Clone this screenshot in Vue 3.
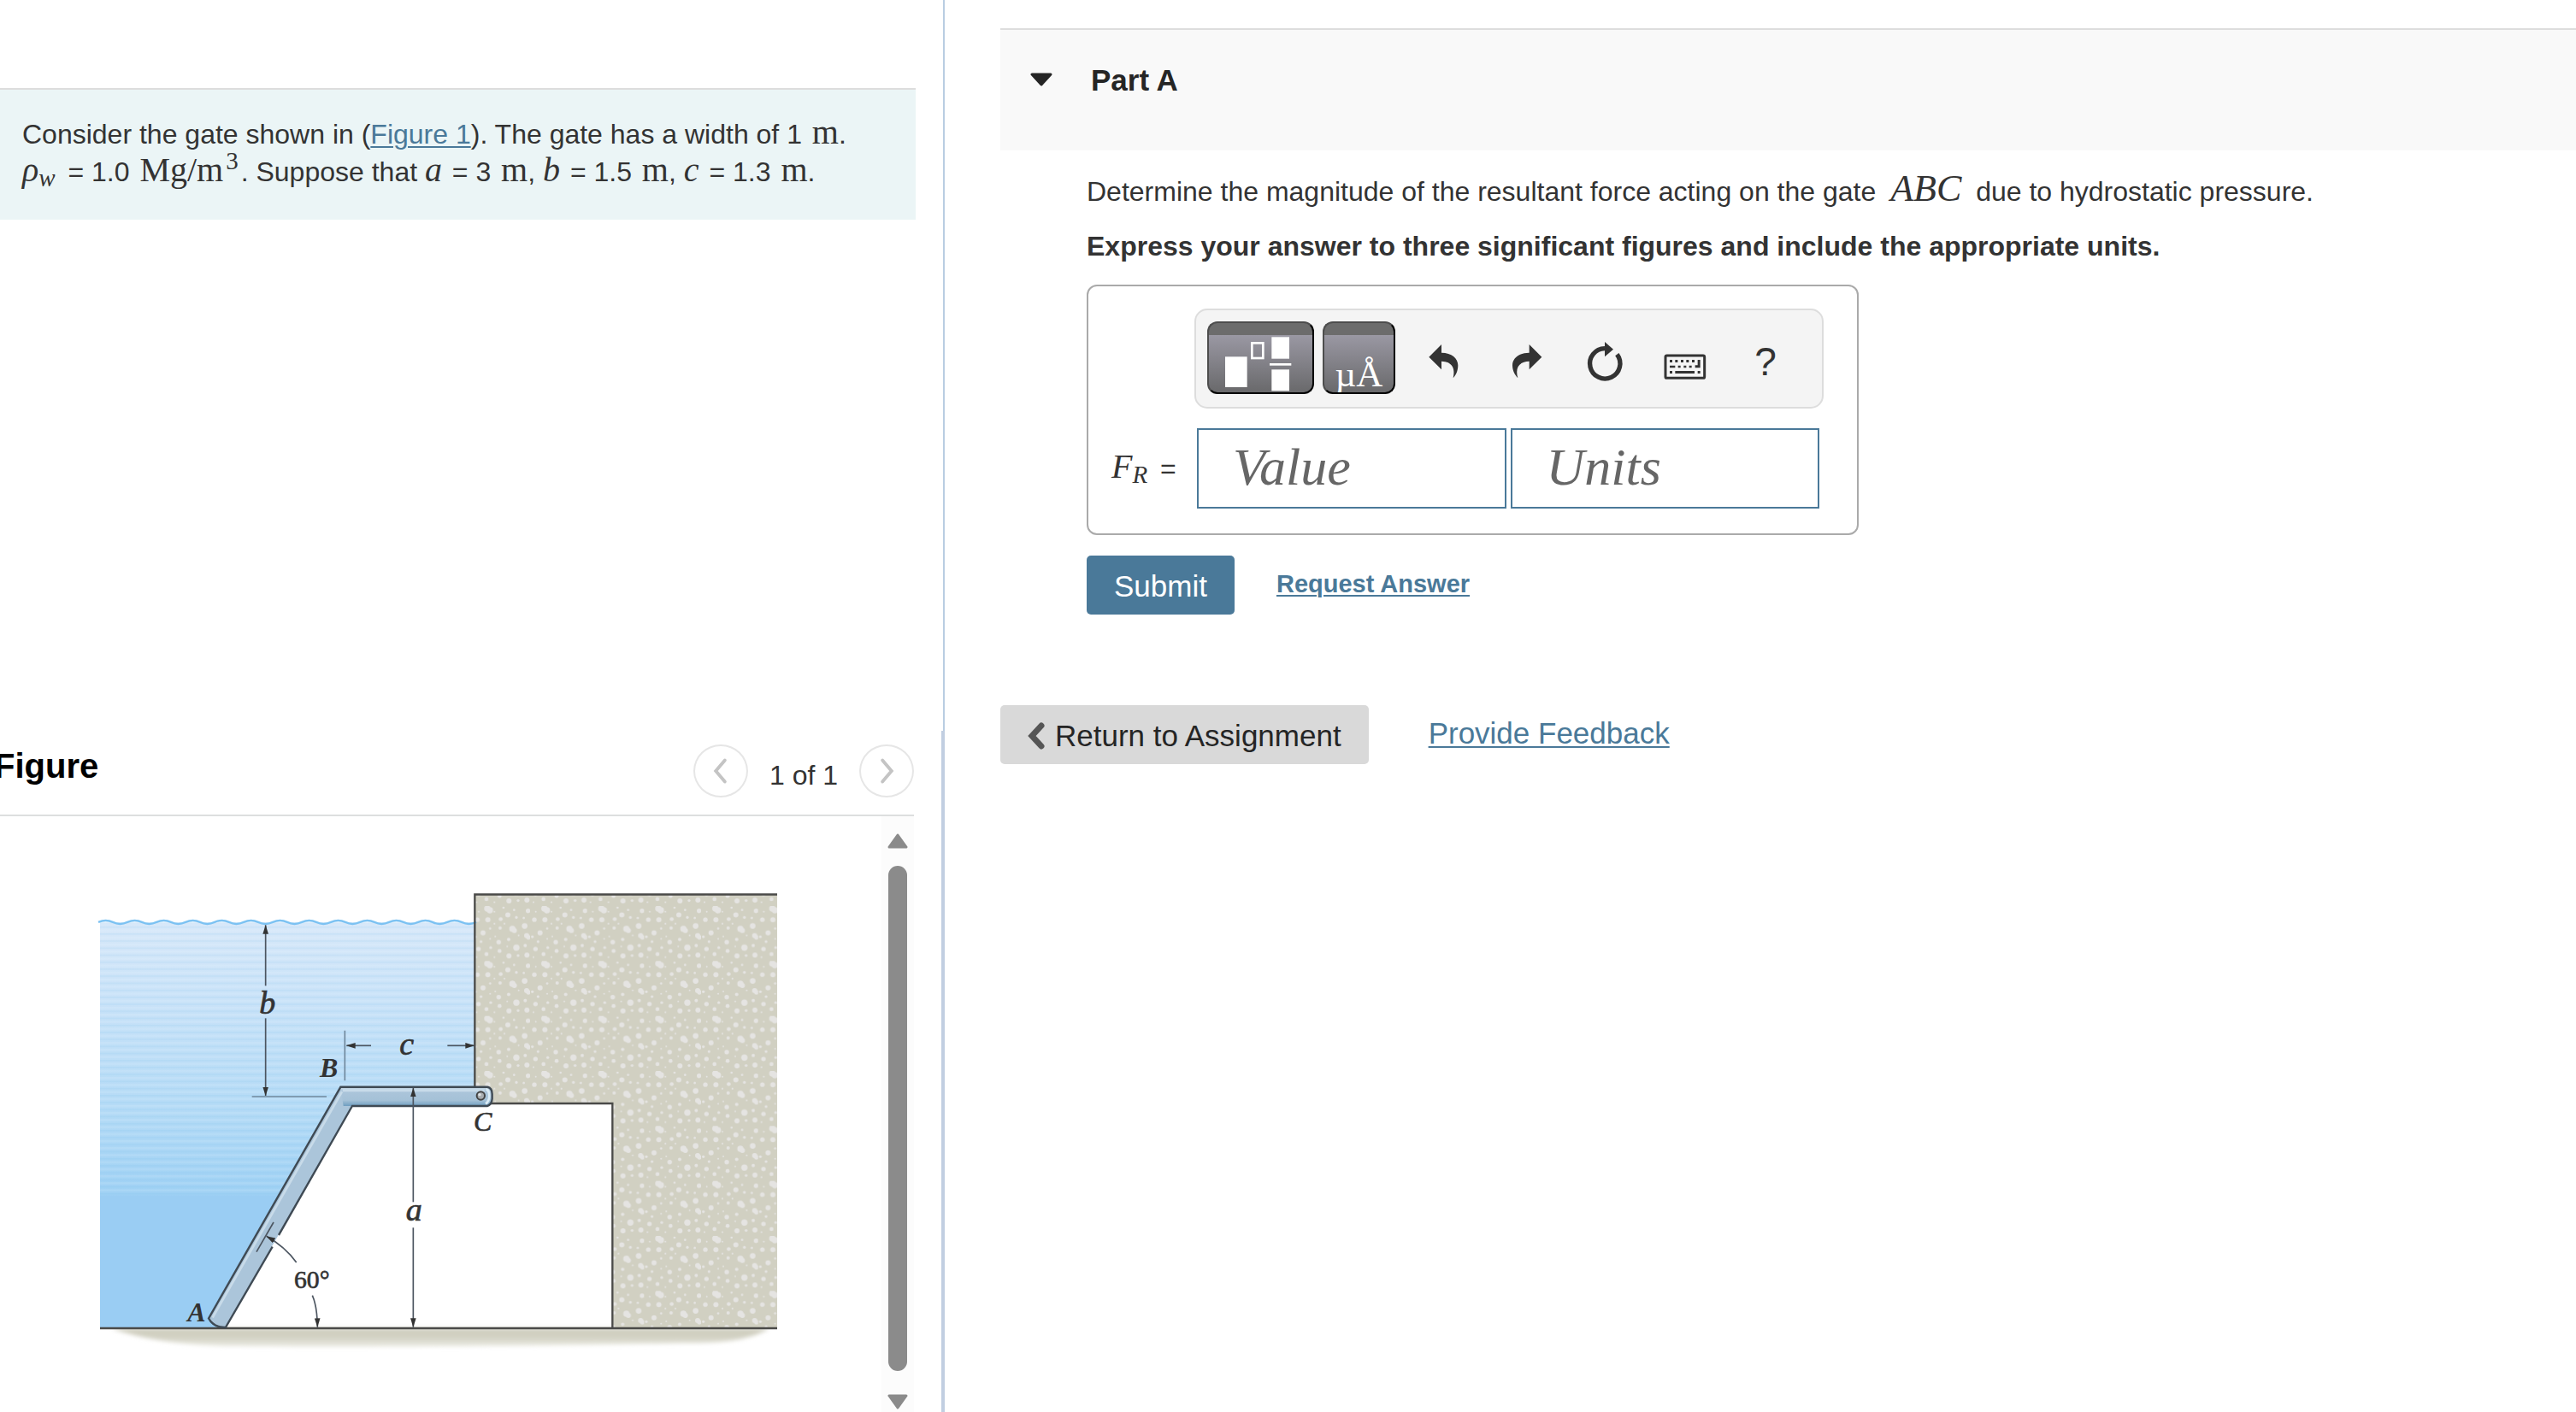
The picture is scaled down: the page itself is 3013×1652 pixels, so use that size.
<template>
  <main class="page">
    <div class="side">
      <section class="intro">
        <div class="problem">
          Consider the gate shown in (<a href="#figure">Figure 1</a>). The gate has a width of 1 <span class="math-unit">m</span>.<br />
          <i class="math">ρ<sub>w</sub></i> = 1.0 <span class="math-unit">Mg/m<sup>3</sup></span>. Suppose that
          <i class="math">a</i> = 3 <span class="math-unit">m</span>, <i class="math">b</i> = 1.5
          <span class="math-unit">m</span>, <i class="math">c</i> = 1.3 <span class="math-unit">m</span>.
        </div>
      </section>

      <section id="figure" class="figure">
        <header class="figure__header">
          <h2>Figure</h2>
          <nav class="pager">
            <button type="button" class="pager__button" aria-label="Previous figure">
              <svg viewBox="0 0 60 60"><path d="M35 17 24 30 35 43" /></svg>
            </button>
            <span class="pager__count">1 of 1</span>
            <button type="button" class="pager__button" aria-label="Next figure">
              <svg viewBox="0 0 60 60"><path d="M25 17 36 30 25 43" /></svg>
            </button>
          </nav>
        </header>

        <div class="figure__body">
          <svg class="drawing" viewBox="0 0 2460 1680" role="img" aria-label="Gate ABC">
            <defs>
              <linearGradient id="water" x1="0" y1="0" x2="0" y2="1">
                <stop offset="0" stop-color="#d7e8f9" />
                <stop offset="0.2" stop-color="#c8e2f8" />
                <stop offset="0.45" stop-color="#b5dbf6" />
                <stop offset="0.672" stop-color="#9fd1f4" />
                <stop offset="0.674" stop-color="#9acdf3" />
                <stop offset="1" stop-color="#9acdf3" />
              </linearGradient>
              <pattern id="ripples" width="40" height="23" patternUnits="userSpaceOnUse">
                <rect width="40" height="7" fill="#ffffff" opacity="0.1" />
                <rect y="13" width="40" height="4" fill="#6fb6e8" opacity="0.12" />
              </pattern>
              <pattern id="stones" x="1560" y="90" width="200" height="193" patternUnits="userSpaceOnUse">
                <rect width="200" height="193" fill="#d1d0c2" />
                <circle v-for="(s, i) in stones" :key="i" :cx="s[0]" :cy="s[1]" :r="s[2]" fill="#e5e4e2" />
              </pattern>
              <linearGradient id="steel" x1="0" y1="0" x2="0" y2="1">
                <stop offset="0" stop-color="#c9dae7" />
                <stop offset="0.25" stop-color="#abc5da" />
                <stop offset="0.7" stop-color="#a5c1d7" />
                <stop offset="1" stop-color="#6f9ec0" />
              </linearGradient>
              <linearGradient id="soil" x1="0" y1="0" x2="0" y2="1">
                <stop offset="0" stop-color="#cdccbc" />
                <stop offset="0.5" stop-color="#d3d2c4" />
                <stop offset="1" stop-color="#ecece5" />
              </linearGradient>
              <filter id="soft" x="-5%" y="-30%" width="110%" height="160%">
                <feGaussianBlur stdDeviation="7" />
              </filter>
              <marker id="arrow" viewBox="0 0 32 20" refX="31" refY="10" markerWidth="32" markerHeight="20"
                      markerUnits="userSpaceOnUse" orient="auto-start-reverse">
                <path d="M0 0 32 10 0 20Z" fill="#333" />
              </marker>
            </defs>

            <path d="M1366 49H2427V1572H1849V783H1366Z" fill="url(#stones)" />

            <g transform="scale(1 1.0714)">
              <path d="M90 1468H2400C2330 1505 2240 1518 2100 1516C1700 1524 1000 1532 500 1526C330 1522 210 1505 90 1468Z"
                    fill="url(#soil)" filter="url(#soft)" />

              <path d="M51 138H1366V700H920L470 1466H51Z" fill="url(#water)" />
              <path d="M51 145H1366V700H920L680 1032H51Z" fill="url(#ripples)" />
              <path :d="wave" class="wave" />

              <path d="M2427 46H1366V690M1415 731H1849V1467" class="edge" />
              <path d="M51 1467H2427" class="edge" />

              <path d="M895 677H1410Q1427 680 1427 700V716Q1425 736 1410 739H936L492 1464Q450 1466 432 1435Z" fill="#abc5da" />
              <path d="M895 677H1410Q1427 680 1427 700V716Q1425 736 1410 739H936L905 739Z" fill="url(#steel)" />
              <path d="M903 688H1400M900 692 446 1432" class="shine" />
              <path d="M1406 684Q1417 690 1417 706T1404 732" stroke="#dcecf6" stroke-width="8" fill="none" />
              <path d="M656 1200 492 1464Q450 1466 432 1435L895 677H1410Q1427 680 1427 700V716Q1425 736 1410 739H936L678 1162" class="gate" />
            </g>

            <circle cx="1387" cy="756" r="14" fill="#a9adb0" stroke="#444" stroke-width="6" />
            <circle cx="1383" cy="752" r="5" fill="#dfe3e6" />

            <g class="dimension">
              <path d="M632 370V157" marker-end="url(#arrow)" />
              <path d="M632 484V756" marker-end="url(#arrow)" />
              <path d="M584 759H846M910 527V703" class="extension" />
              <path d="M1002 580H916" marker-end="url(#arrow)" />
              <path d="M1270 580H1364" marker-end="url(#arrow)" />
              <path d="M1150 1129V729" marker-end="url(#arrow)" />
              <path d="M1150 1219V1568" marker-end="url(#arrow)" />
              <path d="M660 1200 600 1304" />
              <path d="M740 1341Q700 1286 635 1249" marker-end="url(#arrow)" />
              <path d="M796 1457Q813 1495 814 1568" marker-end="url(#arrow)" />
            </g>

            <g class="letters">
              <text x="610" y="467" class="letters__large">b</text>
              <text x="1102" y="611" class="letters__large">c</text>
              <text x="1124" y="1195" class="letters__large">a</text>
              <text x="822" y="691" class="letters__bold">B</text>
              <text x="358" y="1547" class="letters__bold">A</text>
              <text x="1362" y="879">C</text>
              <text x="732" y="1431" class="letters__upright">60°</text>
            </g>
          </svg>

          <div class="scrollbar" aria-hidden="true">
            <svg class="scrollbar__arrow" viewBox="0 0 24 18"><path d="M12 2 22 16H2Z" /></svg>
            <div class="scrollbar__thumb"></div>
            <svg class="scrollbar__arrow" viewBox="0 0 24 18"><path d="M2 2H22L12 16Z" /></svg>
          </div>
        </div>
      </section>
    </div>

    <div class="content">
      <header class="part">
        <svg class="part__caret" viewBox="0 0 26 16"><path d="M2 2H24L13 14Z" /></svg>
        <h1>Part A</h1>
      </header>

      <form class="question" @submit.prevent>
        <p>
          Determine the magnitude of the resultant force acting on the gate <i class="math math--gate">ABC</i> due to
          hydrostatic pressure.
        </p>
        <p class="question__hint">Express your answer to three significant figures and include the appropriate units.</p>

        <div class="answer">
          <div class="toolbar">
            <button type="button" class="tool tool--wide" aria-label="Templates">
              <svg viewBox="0 0 363 243" fill="#fff">
                <rect x="57" y="118" width="77" height="107" />
                <rect x="151" y="70" width="39" height="53" fill="none" stroke="#fff" stroke-width="8" />
                <rect x="220" y="49" width="62" height="76" />
                <rect x="213" y="141" width="76" height="8" />
                <rect x="220" y="163" width="62" height="75" />
              </svg>
            </button>
            <button type="button" class="tool">µÅ</button>
            <div class="toolbar__icons">
              <button type="button" aria-label="Undo">
                <svg viewBox="0 0 282 255">
                  <path d="M88 125 132 81V110C168 110 190 130 190 154C190 174 182 190 173 199C181 165 170 141 132 140V169Z" />
                </svg>
              </button>
              <button type="button" aria-label="Redo">
                <svg viewBox="0 0 282 255">
                  <path d="M202 125 158 81V110C122 110 99 130 99 154C99 174 109 190 118 199C108 165 120 141 158 140V169Z" />
                </svg>
              </button>
              <button type="button" aria-label="Reset">
                <svg viewBox="0 0 282 255">
                  <path d="M184 116A53 53 0 1 1 141 95" fill="none" stroke="#333" stroke-width="16" />
                  <path d="M141 72 171 98 141 124Z" />
                </svg>
              </button>
              <button type="button" aria-label="Keyboard shortcuts">
                <svg viewBox="0 0 282 255">
                  <rect x="72" y="120" width="137" height="79" rx="5" fill="none" stroke="#333" stroke-width="9" />
                  <path d="M87 135h9v9h-9zM106 135h9v9h-9zM126 135h9v9h-9zM145 135h9v9h-9zM165 135h9v9h-9zM185 135h9v28h-18v-9h9zM87 155h19v8h-19zM116 155h9v8h-9zM136 155h9v8h-9zM155 155h9v8h-9zM87 174h9v9h-9zM106 174h68v9h-68zM185 174h9v9h-9z" />
                </svg>
              </button>
              <button type="button" class="toolbar__help" aria-label="Help">?</button>
            </div>
          </div>

          <label class="answer__label" for="value"><i class="math">F<sub>R</sub></i> =</label>
          <div class="answer__fields">
            <input id="value" v-model="value" type="text" placeholder="Value" />
            <input v-model="units" type="text" placeholder="Units" aria-label="Units" />
          </div>
        </div>

        <div class="actions">
          <button type="submit" class="button button--primary">Submit</button>
          <a href="#" class="actions__request">Request Answer</a>
        </div>
      </form>

      <footer class="footer">
        <button type="button" class="button">
          <svg class="button__chevron" viewBox="0 0 20 32"><path d="M16 4 5 16 16 28" /></svg>
          Return to Assignment
        </button>
        <a href="#" class="footer__feedback">Provide Feedback</a>
      </footer>
    </div>
  </main>
</template>

<script setup>
import { ref } from 'vue'

const value = ref('')
const units = ref('')

// [x, y, radius] of each pebble in one tile of the concrete
const stones = [
  [50, 9, 11], [59, 15, 11], [122, 31, 9], [193, 17, 8], [15, 48, 8], [52, 48, 9], [97, 46, 7],
  [35, 94, 9], [60, 79, 4], [95, 77, 6], [138, 80, 11], [145, 86, 9], [181, 70, 10], [110, 62, 3],
  [152, 40, 5], [188, 104, 9], [194, 110, 8], [125, 117, 6], [90, 127, 8], [62, 146, 5], [28, 125, 5],
  [19, 151, 8], [152, 146, 11], [93, 158, 7], [126, 175, 9], [47, 169, 7], [189, 172, 9], [158, 174, 5],
  [183, 139, 6], [107, 6, 4], [144, 14, 4], [178, 42, 4], [78, 107, 3], [160, 103, 3], [8, 108, 5],
  [75, 20, 3], [20, 20, 3], [75, 62, 3], [120, 142, 3], [75, 180, 3], [12, 180, 3], [60, 115, 3]
]

// water surface: thirteen crests between the left edge and the wall
const wave = 'M45 137' + ' q26 -11 51 0 t51 0'.repeat(13)
</script>

<style>
body {
  margin: 0;
  background: #ffffff;
}
</style>

<style scoped>
.page {
  display: grid;
  grid-template-columns: minmax(0, 1105fr) minmax(0, 1908fr);
  height: 100vh;
  overflow: hidden;
  color: #333333;
  font-family: "Liberation Sans", Arial, sans-serif;
  font-size: 32px;
  line-height: 44px;
}

a {
  color: #4a7999;
  text-decoration-thickness: 2px;
  text-underline-offset: 3px;
}

button {
  font: inherit;
  cursor: pointer;
}

svg {
  display: block;
}

.math,
.math-unit {
  margin-right: 3px;
  font-family: "Liberation Serif", "Times New Roman", serif;
  font-size: 40px;
  line-height: 0;
}

.math-unit {
  margin: 0 0 0 3px;
}

.math--gate {
  margin: 0 8px;
  font-size: 44px;
}

sub,
sup {
  margin-right: 3px;
  font-size: 29px;
  line-height: 0;
  vertical-align: -6px;
}

sup {
  margin-left: 3px;
  vertical-align: 14px;
}

.side {
  display: grid;
  grid-template-rows: minmax(0, 855fr) minmax(0, 797fr);
  min-height: 0;
}

.intro {
  padding: 103px 32px 0 0;
  border-right: 2px solid #b9cde2;
}

.problem {
  padding: 30px 26px 34px;
  border-top: 2px solid #dddddd;
  background: #ebf5f6;
  white-space: nowrap;
}

.figure {
  display: flex;
  flex-direction: column;
  padding-right: 32px;
  border-right: 4px solid #c1cee1;
  overflow: hidden;
}

.figure__header {
  display: flex;
  justify-content: space-between;
  box-sizing: border-box;
  height: 100px;
  margin-left: -7px;
  padding-top: 16px;
  border-bottom: 2px solid #dddfdf;
}

.figure__header h2 {
  margin: 0;
  padding-top: 3px;
  color: #000000;
  font-size: 40px;
}

.pager {
  display: flex;
}

.pager__button {
  width: 64px;
  height: 62px;
  padding: 0;
  border: 2px solid #e6e6e6;
  border-radius: 50%;
  background: #ffffff;
}

.pager__button path {
  fill: none;
  stroke: #c4c4c4;
  stroke-width: 4;
  stroke-linecap: round;
}

.pager__button svg {
  width: 100%;
  height: 100%;
}

.pager__count {
  width: 130px;
  padding-top: 14px;
  text-align: center;
}

.figure__body {
  display: flex;
  flex: 1;
  justify-content: space-between;
  min-height: 0;
  padding-left: 100px;
}

.drawing {
  flex: 0 0 820px;
  height: 560px;
  margin-top: 75px;
}

.wave {
  fill: none;
  stroke: #7cc2f2;
  stroke-width: 7;
}

.edge,
.gate {
  fill: none;
  stroke: #4a4a48;
  stroke-width: 7;
}

.gate {
  stroke: #3f4a54;
}

.shine {
  fill: none;
  stroke: #c8dbe9;
  stroke-width: 8;
}

.dimension path {
  fill: none;
  stroke: #4c5560;
  stroke-width: 5;
}

.dimension .extension {
  stroke: #70889c;
}

.letters {
  fill: #333333;
  font-family: "Liberation Serif", "Times New Roman", serif;
  font-size: 96px;
  font-style: italic;
}

.letters text {
  stroke: #333333;
  stroke-width: 2;
}

.letters .letters__large {
  font-size: 114px;
}

.letters .letters__bold {
  font-weight: 700;
  stroke: none;
}

.letters .letters__upright {
  font-size: 89px;
  font-style: normal;
}

.scrollbar {
  display: flex;
  flex: 0 0 38px;
  flex-direction: column;
  align-items: center;
  box-sizing: border-box;
  padding: 20px 0 3px;
  background: #fcfcfc;
}

.scrollbar__arrow {
  width: 24px;
  height: 18px;
  fill: #8b8b8b;
  stroke: #8b8b8b;
  stroke-width: 3;
  stroke-linejoin: round;
}

.scrollbar__thumb {
  flex: 1;
  width: 22px;
  margin: 20px 0 27px;
  border-radius: 11px;
  background: #8b8b8b;
}

.content {
  padding: 33px 0 0 65px;
}

.part {
  display: flex;
  gap: 45px;
  box-sizing: border-box;
  height: 143px;
  padding: 37px 35px 0;
  border-top: 2px solid #dddddd;
  background: #f9f9f9;
}

.part__caret {
  width: 26px;
  height: 16px;
  margin-top: 13px;
  fill: #252525;
  stroke: #252525;
  stroke-width: 3;
  stroke-linejoin: round;
}

.part h1 {
  margin: 0;
  color: #252525;
  font-size: 35px;
}

.question {
  padding: 26px 0 0 101px;
}

.question p {
  margin: 0 0 20px;
}

.question .question__hint {
  margin-bottom: 23px;
  font-weight: 700;
}

.answer {
  display: grid;
  grid-template-columns: 97px minmax(0, 1fr);
  row-gap: 23px;
  box-sizing: border-box;
  max-width: 903px;
  padding: 26px 39px 29px 27px;
  border: 2px solid #aaaaaa;
  border-radius: 12px;
}

.toolbar {
  display: flex;
  grid-column: 2;
  gap: 10px;
  box-sizing: border-box;
  height: 117px;
  padding: 13px;
  border: 2px solid #dddddd;
  border-radius: 15px;
  background: #f4f4f4;
}

.tool {
  box-sizing: border-box;
  width: 85px;
  height: 85px;
  padding: 25px 0 0;
  overflow: hidden;
  border: 2px solid;
  border-color: #4d4d4d #000000 #000000 #4d4d4d;
  border-radius: 12px;
  background: linear-gradient(#6c6c6c 0 14px, #9a98a3 14px, #69696b 100%);
  color: #ffffff;
  font-family: "Liberation Serif", "Times New Roman", serif;
  font-size: 43px;
  line-height: 70px;
}

.tool--wide {
  width: 125px;
  padding: 0;
}

.toolbar__icons {
  display: flex;
}

.toolbar__icons button {
  width: 94px;
  height: 85px;
  padding: 0;
  border: 0;
  background: none;
  color: #333333;
}

.toolbar__icons svg {
  width: 94px;
  height: 85px;
  fill: #333333;
}

.toolbar__icons .toolbar__help {
  padding-top: 8px;
  font-size: 46px;
}

.answer__label {
  align-self: center;
  white-space: nowrap;
}

.answer__fields {
  display: flex;
  gap: 5px;
  padding: 0 5px 0 3px;
}

.answer__fields input {
  flex: 1;
  box-sizing: border-box;
  min-width: 0;
  height: 94px;
  padding: 0 40px 4px;
  border: 2px solid #4a7999;
  border-radius: 0;
  font-family: "Liberation Serif", "Times New Roman", serif;
  font-size: 62px;
}

.answer__fields input::placeholder {
  color: #666666;
  font-style: italic;
}

.actions {
  display: flex;
  gap: 49px;
  align-items: center;
  margin-top: 24px;
}

.actions__request {
  padding-bottom: 3px;
  font-size: 29px;
  font-weight: 700;
}

.button {
  display: flex;
  gap: 12px;
  align-items: center;
  height: 69px;
  padding: 2px 32px 0;
  border: 0;
  border-radius: 5px;
  background: #d9d9d9;
  color: #252525;
  font-size: 35px;
}

.button--primary {
  background: #4a7999;
  color: #ffffff;
}

.button__chevron {
  width: 20px;
  height: 32px;
  fill: none;
  stroke: #555555;
  stroke-width: 7;
  stroke-linecap: round;
}

.footer {
  display: flex;
  gap: 70px;
  align-items: center;
  margin-top: 106px;
  font-size: 35px;
}

.footer__feedback {
  padding-bottom: 3px;
}
</style>
